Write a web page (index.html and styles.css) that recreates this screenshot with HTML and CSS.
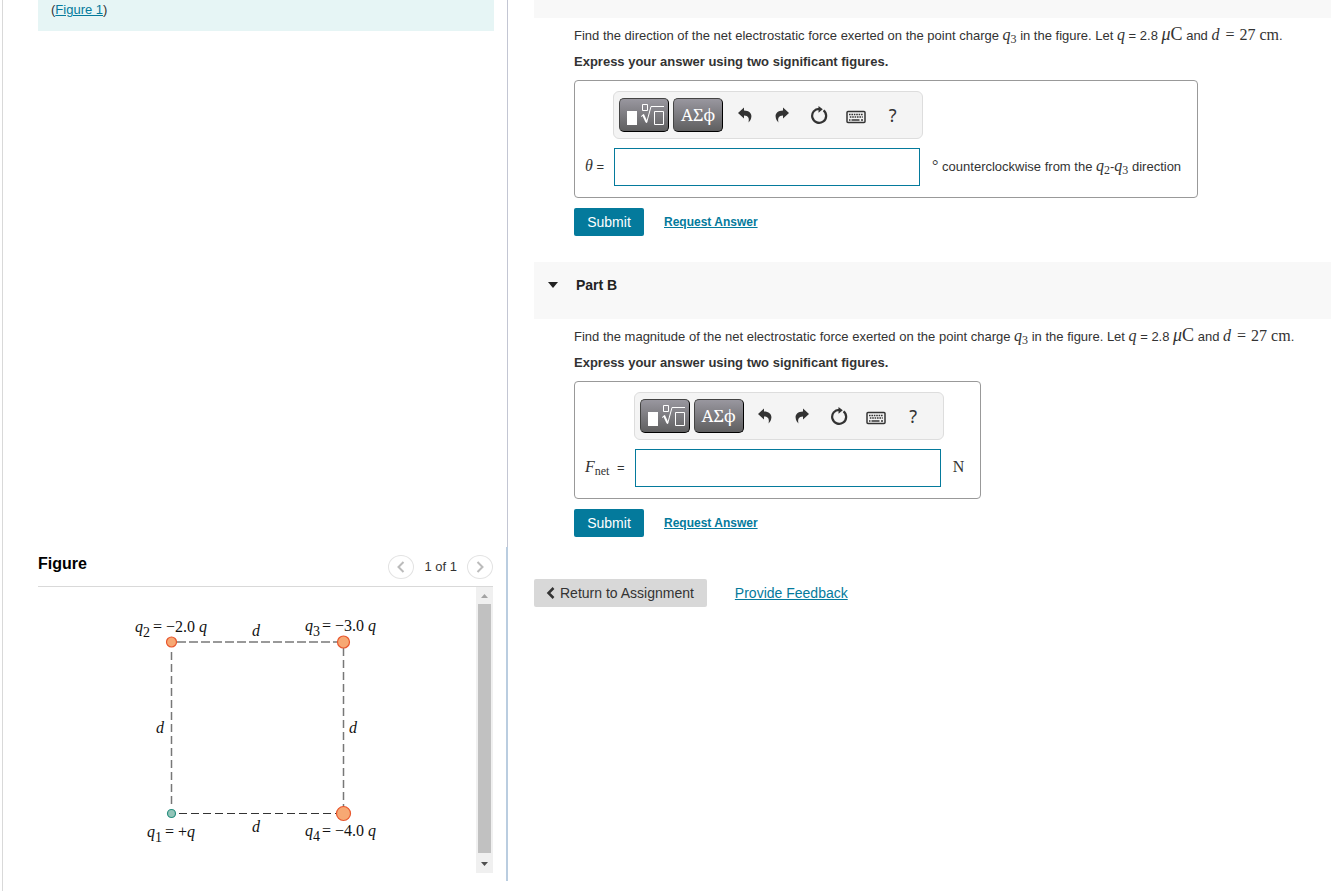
FILE: index.html
```html
<!DOCTYPE html>
<html lang="en">
<head>
<meta charset="utf-8">
<title>Electrostatic force – Part A and B</title>
<link rel="stylesheet" href="styles.css">
</head>
<body>
<svg class="sprite" aria-hidden="true">
  <symbol id="i-root" viewBox="0 0 48 32">
    <rect x="7" y="12" width="10" height="14" fill="#fff"/>
    <path d="M22.500 5.500h5v6h-5zM34.500 12.500h9v13h-9z" fill="none" stroke="#fff"/>
    <path d="M21 17.500l2.500-1.500" fill="none" stroke="#fff"/>
    <path d="M23 15.500l3.500 7.500" fill="none" stroke="#fff" stroke-width="2"/>
    <path d="M26.500 24l4.500-16.500H44" fill="none" stroke="#fff"/>
  </symbol>
  <symbol id="i-undo" viewBox="0 0 16 16">
    <path d="M1 6L7 .5V3.500C12 3.500 14.600 6.300 14.400 9.500C14.300 12 13 14 11.500 15.500C12.500 11.500 11.500 8.500 7 8.500V11.500Z"/>
  </symbol>
  <symbol id="i-redo" viewBox="0 0 16 16">
    <path d="M15 6L9 .5V3.500C4 3.500 1.400 6.300 1.600 9.500C1.700 12 3 14 4.500 15.500C3.500 11.500 4.500 8.500 9 8.500V11.500Z"/>
  </symbol>
  <symbol id="i-reset" viewBox="0 0 18 18">
    <path d="M13.500 4.300A7 7 0 1 1 9.500 2.800" fill="none" stroke="currentColor" stroke-width="2.200"/>
    <path d="M8.500 0L12.800 3.200L8.500 6.800Z"/>
  </symbol>
  <symbol id="i-keys" viewBox="0 0 20 14">
    <rect x="1" y="1.500" width="18" height="11" rx="1" fill="none" stroke="currentColor" stroke-width="1.500"/>
    <path d="M3 4.500h14M3.800 7h13" fill="none" stroke="currentColor" stroke-width="1.600" stroke-dasharray="1.600 .8"/>
    <path d="M3 10h1.500M5.500 10h8M15 10h2" fill="none" stroke="currentColor" stroke-width="1.600"/>
  </symbol>
</svg>

<div class="page">
  <aside class="side">
    <div class="intro">
      <p class="intro-box">(<a href="#figure">Figure 1</a>)</p>
    </div>
    <section class="figure" id="figure">
      <header class="figure-head">
        <h2>Figure</h2>
        <nav class="pager" aria-label="Figures">
          <button type="button" aria-label="Previous figure"><svg width="10" height="14" viewBox="0 0 10 14"><path d="M7.500 2L2.500 7l5 5"/></svg></button>
          <span>1 of 1</span>
          <button type="button" aria-label="Next figure"><svg width="10" height="14" viewBox="0 0 10 14"><path d="M2.500 2l5 5-5 5"/></svg></button>
        </nav>
      </header>
      <div class="viewer">
        <svg class="diagram" width="438" height="286" viewBox="0 0 438 286" role="img" aria-label="Four charges on a square of side d">
          <g class="sides">
            <path class="top" d="M139 55H299" stroke-dasharray="9 3"/>
            <path d="M133.500 65V221" stroke-dasharray="8 4"/>
            <path d="M305.500 61V220" stroke-dasharray="8 4"/>
            <path class="bottom" d="M141 226.500H299" stroke-dasharray="8 4"/>
          </g>
          <circle class="neg" cx="133.500" cy="55" r="5"/>
          <circle class="neg" cx="305.500" cy="55" r="6"/>
          <circle class="neg" cx="305.500" cy="226.500" r="7"/>
          <circle class="pos" cx="133.500" cy="226.500" r="4"/>
          <g class="labels">
            <text x="97" y="45"><tspan class="it">q</tspan><tspan class="sub" dy="5">2</tspan></text>
            <text x="115" y="45">= −2.0 <tspan class="it">q</tspan></text>
            <text x="267" y="44"><tspan class="it">q</tspan><tspan class="sub" dy="5">3</tspan></text>
            <text x="284" y="44">= −3.0 <tspan class="it">q</tspan></text>
            <text x="109" y="250"><tspan class="it">q</tspan><tspan class="sub" dy="5">1</tspan></text>
            <text x="127" y="250">= +<tspan class="it">q</tspan></text>
            <text x="267" y="249"><tspan class="it">q</tspan><tspan class="sub" dy="5">4</tspan></text>
            <text x="284" y="249">= −4.0 <tspan class="it">q</tspan></text>
            <text class="it" x="214" y="49">d</text>
            <text class="it" x="118" y="146">d</text>
            <text class="it" x="311" y="146">d</text>
            <text class="it" x="214" y="245">d</text>
          </g>
        </svg>
        <div class="scroll" aria-hidden="true">
          <svg width="17" height="17" viewBox="0 0 17 17"><path d="M5 11h7L8.500 7z" fill="#a3a3a3"/></svg>
          <div class="thumb"></div>
          <svg width="17" height="20" viewBox="0 0 17 20"><path d="M5 9h7l-3.500 4z" fill="#505050"/></svg>
        </div>
      </div>
    </section>
  </aside>

  <main class="work">
    <div class="bar bar-cut"></div>
    <form class="part">
      <p>Find the direction of the net electrostatic force exerted on the point charge <span class="m"><i>q</i><sub>3</sub></span> in the figure. Let <i class="m">q</i> = 2.8 <span class="m big"><i>μ</i>C</span> and <span class="m"><i>d</i><span class="eq"> = </span>27 cm</span>.</p>
      <p class="strong">Express your answer using two significant figures.</p>
      <div class="answer">
        <div class="tools" role="toolbar" aria-label="Math input">
          <button type="button" class="key" aria-label="Templates"><svg width="48" height="32"><use href="#i-root"/></svg></button>
          <button type="button" class="key">ΑΣϕ</button>
          <div class="icons">
            <button type="button" aria-label="Undo"><svg width="16" height="16"><use href="#i-undo"/></svg></button>
            <button type="button" aria-label="Redo"><svg width="16" height="16"><use href="#i-redo"/></svg></button>
            <button type="button" aria-label="Reset"><svg width="18" height="18"><use href="#i-reset"/></svg></button>
            <button type="button" aria-label="Keyboard shortcuts" class="low"><svg width="20" height="14"><use href="#i-keys"/></svg></button>
            <button type="button">?</button>
          </div>
        </div>
        <label class="name" for="theta"><i class="m">θ</i> =</label>
        <input type="text" id="theta">
        <span class="unit"><span class="m">°</span> counterclockwise from the <span class="m"><i>q</i><sub>2</sub></span>-<span class="m"><i>q</i><sub>3</sub></span> direction</span>
      </div>
      <div class="actions">
        <button type="submit" class="submit">Submit</button>
        <a href="#request-a">Request Answer</a>
      </div>
    </form>

    <h2 class="bar"><button type="button" class="toggle" aria-expanded="true"><span class="caret"></span>Part B</button></h2>
    <form class="part">
      <p>Find the magnitude of the net electrostatic force exerted on the point charge <span class="m"><i>q</i><sub>3</sub></span> in the figure. Let <i class="m">q</i> = 2.8 <span class="m big"><i>μ</i>C</span> and <span class="m"><i>d</i><span class="eq"> = </span>27 cm</span>.</p>
      <p class="strong">Express your answer using two significant figures.</p>
      <div class="answer">
        <div class="tools" role="toolbar" aria-label="Math input">
          <button type="button" class="key" aria-label="Templates"><svg width="48" height="32"><use href="#i-root"/></svg></button>
          <button type="button" class="key">ΑΣϕ</button>
          <div class="icons">
            <button type="button" aria-label="Undo"><svg width="16" height="16"><use href="#i-undo"/></svg></button>
            <button type="button" aria-label="Redo"><svg width="16" height="16"><use href="#i-redo"/></svg></button>
            <button type="button" aria-label="Reset"><svg width="18" height="18"><use href="#i-reset"/></svg></button>
            <button type="button" aria-label="Keyboard shortcuts" class="low"><svg width="20" height="14"><use href="#i-keys"/></svg></button>
            <button type="button">?</button>
          </div>
        </div>
        <label class="name" for="fnet"><span class="m wide"><i>F</i><sub>net</sub></span> =</label>
        <input type="text" id="fnet">
        <span class="unit"><span class="m">N</span></span>
      </div>
      <div class="actions">
        <button type="submit" class="submit">Submit</button>
        <a href="#request-b">Request Answer</a>
      </div>
    </form>

    <footer class="foot">
      <button type="button" class="return"><svg width="9" height="12" viewBox="0 0 9 12"><path d="M7.500 1L2.500 6l5 5" fill="none" stroke="currentColor" stroke-width="2.500"/></svg>Return to Assignment</button>
      <a href="#feedback">Provide Feedback</a>
    </footer>
  </main>
</div>
</body>
</html>
```

FILE: styles.css
```css
* { box-sizing: border-box; }

body {
  margin: 0;
  background: #fff;
  color: #333;
  font: 13px/26px "Liberation Sans", Arial, sans-serif;
}

h2, p { margin: 0; }
a { color: #047a9c; }
button { font-family: inherit; color: inherit; cursor: pointer; }
.sprite { display: none; }

.page {
  display: grid;
  grid-template-columns: minmax(320px, 506px) minmax(0, 1fr);
  min-height: 100vh;
  padding-left: 2px;
}

/* Left column */
.side {
  display: flex;
  flex-direction: column;
  padding-bottom: 10px;
  border-left: 1px solid #d9d9d9;
}

.intro {
  flex: 1;
  padding: 0 13px 0 35px;
  border-right: 1px solid #c3c6d3;
}

.intro-box {
  padding: 2px 13px 13px;
  background: #e6f5f5;
  line-height: 16px;
}

.figure {
  padding: 0 13px 8px 35px;
  border-right: 2px solid #bacde0;
}

.figure-head {
  display: flex;
  justify-content: space-between;
  align-items: center;
  height: 40px;
  border-bottom: 1px solid #d9d9d9;
}

.figure-head h2 {
  padding-bottom: 5px;
  color: #000;
  font-size: 16px;
}

.pager {
  display: flex;
  align-items: center;
  gap: 10px;
}

.pager button {
  display: flex;
  justify-content: center;
  align-items: center;
  width: 26px;
  height: 24px;
  padding: 0;
  border: 1px solid #e3e3e3;
  border-radius: 50%;
  background: #fff;
}

.pager path { fill: none; stroke: #bbb; stroke-width: 2; }

.viewer { display: flex; justify-content: space-between; }
.diagram { flex: 0 1 auto; min-width: 0; }
.sides { fill: none; stroke: #777; stroke-width: 1.5; }
.top { stroke: #999; stroke-width: 2; }
.bottom { stroke: #333; stroke-width: 1; }
.neg { fill: #f7a873; stroke: #e8562d; stroke-width: 1.2; }
.pos { fill: #93c5b9; stroke: #2a9080; stroke-width: 1.2; }
.labels { fill: #111; font-family: "Liberation Serif", serif; font-size: 16px; }
.it { font-style: italic; }
.sub { font-size: 14px; }

.scroll {
  display: flex;
  flex: none;
  flex-direction: column;
  width: 17px;
  background: #f0f0f0;
}

.scroll svg { display: block; }
.thumb { flex: 1; margin: 0 2px; background: #c1c1c1; }

/* Right column */
.work { padding-left: 26px; }

.bar {
  display: flex;
  align-items: flex-start;
  min-height: 57px;
  padding: 10px 14px;
  background: #f8f8f8;
}

.bar-cut { min-height: 18px; padding: 0; }

.toggle {
  display: flex;
  align-items: center;
  gap: 18px;
  padding: 0;
  border: 0;
  background: none;
  color: #222;
  font-size: 14px;
  font-weight: bold;
  line-height: 26px;
}

.caret {
  border: 5px solid transparent;
  border-top: 6px solid #222;
  border-bottom: 0;
}

.part { padding: 5px 0 26px 40px; }
.strong { font-weight: bold; }

.m {
  font-family: "Liberation Serif", serif;
  font-size: 16px;
  line-height: 16px;
}

.big { font-size: 18px; }
.eq { padding: 0 1px 0 2px; }
.wide { padding-right: 4px; }
.m sub { font-size: 12px; line-height: 0; vertical-align: -3px; }

.answer {
  display: inline-grid;
  grid-template-columns: auto 310px auto;
  gap: 9px;
  align-items: center;
  margin-top: 5px;
  padding: 10px 16px 11px 10px;
  border: 1px solid #999;
  border-radius: 4px;
  vertical-align: top;
}

.tools {
  display: flex;
  grid-column: 2;
  gap: 4px;
  padding: 6px 5px;
  border: 1px solid #ddd;
  border-radius: 6px;
  background: #f4f4f4;
}

.key {
  width: 50px;
  height: 34px;
  padding: 0;
  border: 1px solid;
  border-color: #444 #000 #000 #444;
  border-radius: 5px;
  background: linear-gradient(#99979f, #5f5f60);
  color: #fff;
  font: 17px/30px "Noto Serif", "DejaVu Serif Condensed", "DejaVu Serif", serif;
}

.key svg { display: block; }

.icons { display: flex; margin-left: -1px; }

.icons button {
  display: flex;
  justify-content: center;
  align-items: center;
  width: 37px;
  padding: 0;
  border: 0;
  background: none;
  font: 18px "Noto Sans", sans-serif;
}

.icons svg { fill: currentColor; }
.icons .low { padding-top: 4px; }

.name { grid-column: 1; text-align: right; }

.answer input {
  width: 306px;
  height: 38px;
  margin-left: 1px;
  padding: 0 8px;
  border: 1px solid #047a9c;
  background: #fff;
  font-size: 16px;
}

.actions {
  display: flex;
  align-items: center;
  gap: 20px;
  margin-top: 10px;
  font-size: 12px;
  font-weight: bold;
}

.submit {
  width: 70px;
  height: 28px;
  padding: 0;
  border: 0;
  border-radius: 2px;
  background: #047a9c;
  color: #fff;
  font-size: 14px;
}

.foot {
  display: flex;
  align-items: center;
  gap: 28px;
  padding-top: 16px;
  font-size: 14px;
}

.return {
  display: flex;
  align-items: center;
  gap: 5px;
  height: 28px;
  padding: 0 13px 0 12px;
  border: 0;
  border-radius: 2px;
  background: #d8d8d8;
  font-size: 14px;
}
```
